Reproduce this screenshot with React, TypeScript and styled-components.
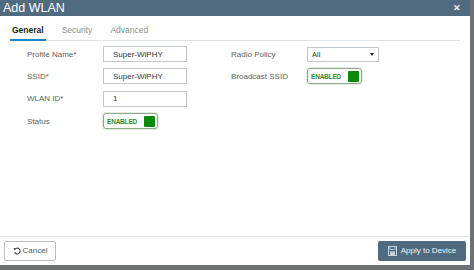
import React from 'react';
import styled, { createGlobalStyle } from 'styled-components';

const GlobalStyle = createGlobalStyle`
    html, body {
        margin: 0;
        padding: 0;
        background: #6e7276;
        font-family: "Liberation Sans", Arial, sans-serif;
    }
`;

const Page = styled.div`
    width: 474px;
    height: 270px;
    overflow: hidden;
`;

const Modal = styled.div`
    width: 470px;
    height: 265px;
    background: #ffffff;
    display: flex;
    flex-direction: column;
`;

const Header = styled.div`
    height: 16px;
    background: #506a80;
    color: #ffffff;
    display: flex;
    align-items: center;
    justify-content: space-between;
    padding: 0 9px 0 3px;
    font-size: 12.5px;
`;

const Close = styled.span`
    font-size: 9px;
    font-weight: bold;
    color: #e8edf1;
    line-height: 1;
`;

const Tabs = styled.div`
    display: flex;
    margin: 0 10px;
    padding-top: 9px;
    border-bottom: 1px solid #dfe3e6;
    width: 450px;
`;

const Tab = styled.div<{ $active?: boolean }>`
    font-size: 8.5px;
    padding: 0 2px 4px 2px;
    margin-right: 14px;
    color: ${(p) => (p.$active ? '#222' : '#8a9096')};
    font-weight: ${(p) => (p.$active ? 'bold' : 'normal')};
    border-bottom: 2px solid ${(p) => (p.$active ? '#1c86c6' : 'transparent')};
    margin-bottom: -1px;
`;

const Body = styled.div`
    flex: 1;
    display: flex;
    padding: 5px 0 0 27px;
`;

const Column = styled.div<{ $width: number }>`
    width: ${(p) => p.$width}px;
    display: flex;
    flex-direction: column;
    gap: 6.4px;
`;

const Row = styled.div`
    display: flex;
    align-items: center;
    height: 16px;
`;

const Label = styled.div`
    width: 76px;
    font-size: 8px;
    color: #5b6167;
`;

const Input = styled.div`
    width: 73px;
    height: 14px;
    border: 1px solid #c3c8cc;
    font-size: 8px;
    color: #333;
    padding-left: 9px;
    display: flex;
    align-items: center;
`;

const Select = styled.div`
    width: 62px;
    height: 13px;
    border: 1px solid #c3c8cc;
    font-size: 7.5px;
    color: #333;
    padding: 0 4px;
    display: flex;
    align-items: center;
    justify-content: space-between;
`;

const Caret = styled.span`
    width: 0;
    height: 0;
    border-left: 2.5px solid transparent;
    border-right: 2.5px solid transparent;
    border-top: 3px solid #222;
`;

const Toggle = styled.div`
    width: 48px;
    height: 14px;
    border: 1px solid #8bab8b;
    border-radius: 3px;
    box-shadow: 0 0 0 1px #e4ece4;
    display: flex;
    align-items: center;
    justify-content: space-between;
    padding: 0 2px 0 3px;
`;

const ToggleText = styled.span`
    font-size: 6.5px;
    font-weight: bold;
    color: #2e8b2e;
    letter-spacing: -0.2px;
`;

const Knob = styled.span`
    width: 11px;
    height: 11px;
    background: #0a8a0a;
    border-radius: 1px;
`;

const Footer = styled.div`
    height: 27px;
    border-top: 1px solid #e2e5e8;
    display: flex;
    align-items: center;
    justify-content: space-between;
    padding: 0 4px 1px 4px;
`;

const CancelButton = styled.div`
    width: 50px;
    height: 18px;
    border: 1px solid #b9bec3;
    border-radius: 2px;
    display: flex;
    align-items: center;
    justify-content: center;
    gap: 2px;
    font-size: 8px;
    color: #555b61;
`;

const ApplyButton = styled.div`
    width: 88px;
    height: 20px;
    background: #506a80;
    border-radius: 2px;
    display: flex;
    align-items: center;
    justify-content: center;
    gap: 4px;
    font-size: 8px;
    color: #eef2f5;
`;

const fields = [
    { label: 'Profile Name*', value: 'Super-WiPHY' },
    { label: 'SSID*', value: 'Super-WiPHY' },
    { label: 'WLAN ID*', value: '1' },
];

const EnabledToggle = () => (
    <Toggle>
        <ToggleText>ENABLED</ToggleText>
        <Knob />
    </Toggle>
);

const App = () => {
    return (
        <Page>
            <GlobalStyle />
            <Modal>
                <Header>
                    <span>Add WLAN</span>
                    <Close>✕</Close>
                </Header>
                <Tabs>
                    <Tab $active>General</Tab>
                    <Tab>Security</Tab>
                    <Tab>Advanced</Tab>
                </Tabs>
                <Body>
                    <Column $width={204}>
                        {fields.map((f) => (
                            <Row key={f.label}>
                                <Label>{f.label}</Label>
                                <Input>{f.value}</Input>
                            </Row>
                        ))}
                        <Row>
                            <Label>Status</Label>
                            <EnabledToggle />
                        </Row>
                    </Column>
                    <Column $width={200}>
                        <Row>
                            <Label>Radio Policy</Label>
                            <Select>
                                <span>All</span>
                                <Caret />
                            </Select>
                        </Row>
                        <Row>
                            <Label>Broadcast SSID</Label>
                            <EnabledToggle />
                        </Row>
                    </Column>
                </Body>
                <Footer>
                    <CancelButton>
                        <svg width="8" height="8" viewBox="0 0 10 10">
                            <path d="M2.2 3.2 A3.6 3.6 0 1 1 2 6.6" fill="none" stroke="#444" strokeWidth="1.4" />
                            <path d="M0.6 1.2 L3.6 1.6 L2.2 4.4 Z" fill="#444" />
                        </svg>
                        <span>Cancel</span>
                    </CancelButton>
                    <ApplyButton>
                        <svg width="9" height="10" viewBox="0 0 9 10">
                            <rect x="0.5" y="0.5" width="8" height="9" fill="none" stroke="#c9d3db" strokeWidth="1" />
                            <rect x="2" y="0.5" width="5" height="3" fill="none" stroke="#c9d3db" strokeWidth="0.8" />
                            <rect x="2" y="5.5" width="5" height="3.5" fill="#c9d3db" />
                        </svg>
                        <span>Apply to Device</span>
                    </ApplyButton>
                </Footer>
            </Modal>
        </Page>
    );
};

export default App;
